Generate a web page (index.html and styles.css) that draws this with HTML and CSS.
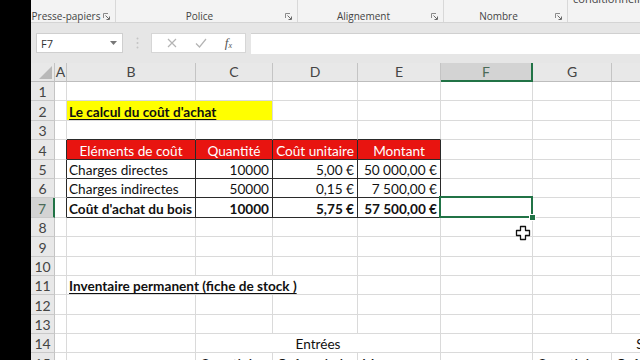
FILE: index.html
```html
<!DOCTYPE html>
<html>

<head>
    <meta charset="utf-8">
    <link rel="stylesheet" href="styles.css">
</head>

<body>

    <div class="screen">
        <div class="edge"></div>

        <div class="excel">

            <div class="ribbon">
                <div class="group g-clip"><span class="glabel">Presse-papiers</span><span class="launcher"><svg width="7" height="7" viewBox="0 0 7 7"><path d="M0.5 5V0.5H5" fill="none" stroke="#8a8a8a"/><path d="M2.5 2.5L6 6M3.5 6.5H6.5V3.5" fill="none" stroke="#6a6a6a"/></svg></span></div>
                <div class="group g-font"><span class="glabel">Police</span><span class="launcher"><svg width="7" height="7" viewBox="0 0 7 7"><path d="M0.5 5V0.5H5" fill="none" stroke="#8a8a8a"/><path d="M2.5 2.5L6 6M3.5 6.5H6.5V3.5" fill="none" stroke="#6a6a6a"/></svg></span></div>
                <div class="group g-align"><span class="glabel">Alignement</span><span class="launcher"><svg width="7" height="7" viewBox="0 0 7 7"><path d="M0.5 5V0.5H5" fill="none" stroke="#8a8a8a"/><path d="M2.5 2.5L6 6M3.5 6.5H6.5V3.5" fill="none" stroke="#6a6a6a"/></svg></span></div>
                <div class="group g-num"><span class="glabel">Nombre</span><span class="launcher"><svg width="7" height="7" viewBox="0 0 7 7"><path d="M0.5 5V0.5H5" fill="none" stroke="#8a8a8a"/><path d="M2.5 2.5L6 6M3.5 6.5H6.5V3.5" fill="none" stroke="#6a6a6a"/></svg></span></div>
                <div class="group g-style"><span class="gtop">conditionnelle</span></div>
            </div>

            <div class="fbar">
                <div class="namebox">
                    <span>F7</span>
                    <svg width="7" height="4" viewBox="0 0 7 4"><path d="M0 0H7L3.5 4Z" fill="#777"/></svg>
                </div>
                <div class="grip">
                    <svg width="3" height="12" viewBox="0 0 3 12"><circle cx="1.5" cy="1.5" r="1" fill="#c4c4c4"/><circle cx="1.5" cy="6" r="1" fill="#c4c4c4"/><circle cx="1.5" cy="10.5" r="1" fill="#c4c4c4"/></svg>
                </div>
                <div class="fbtns">
                    <svg width="10" height="10" viewBox="0 0 10 10"><path d="M1 1L9 9M9 1L1 9" stroke="#b4b4b4" stroke-width="1.2"/></svg>
                    <svg width="12" height="10" viewBox="0 0 12 10"><path d="M1 5.5L4.5 9L11 1" fill="none" stroke="#b4b4b4" stroke-width="1.2"/></svg>
                    <span class="fx">f<sub>x</sub></span>
                </div>
                <div class="finput"></div>
            </div>

            <div class="sheet">
                <table class="grid">
                    <colgroup>
                        <col class="c-rh">
                        <col class="c-a">
                        <col class="c-b">
                        <col class="c-c">
                        <col class="c-d">
                        <col class="c-e">
                        <col class="c-f">
                        <col class="c-g">
                        <col class="c-h">
                        <col class="c-i">
                    </colgroup>
                    <tr class="colhead">
                        <th class="corner"><svg width="13" height="13" viewBox="0 0 13 13"><path d="M13 0V13H0Z" fill="#b9b9b9"/></svg></th>
                        <th>A</th>
                        <th>B</th>
                        <th>C</th>
                        <th>D</th>
                        <th>E</th>
                        <th class="cur">F</th>
                        <th>G</th>
                        <th>H</th>
                        <th>I</th>
                    </tr>
                    <tr>
                        <th>1</th>
                        <td></td><td></td><td></td><td></td><td></td><td></td><td></td><td></td><td></td>
                    </tr>
                    <tr>
                        <th>2</th>
                        <td></td>
                        <td colspan="2" class="title yellow">Le calcul du coût d'achat</td>
                        <td></td><td></td><td></td><td></td><td></td><td></td>
                    </tr>
                    <tr>
                        <th>3</th>
                        <td></td>
                        <td class="tt"></td><td class="tt"></td><td class="tt"></td><td class="tt"></td>
                        <td></td><td></td><td></td><td></td>
                    </tr>
                    <tr>
                        <th>4</th>
                        <td class="tl"></td>
                        <td class="hd">Eléments de coût</td>
                        <td class="hd">Quantité</td>
                        <td class="hd">Coût unitaire</td>
                        <td class="hd">Montant</td>
                        <td></td><td></td><td></td><td></td>
                    </tr>
                    <tr>
                        <th>5</th>
                        <td class="tl"></td>
                        <td class="tb">Charges directes</td>
                        <td class="tb num">10000</td>
                        <td class="tb num">5,00 €</td>
                        <td class="tb num">50 000,00 €</td>
                        <td></td><td></td><td></td><td></td>
                    </tr>
                    <tr>
                        <th>6</th>
                        <td class="tl"></td>
                        <td class="tb">Charges indirectes</td>
                        <td class="tb num">50000</td>
                        <td class="tb num">0,15 €</td>
                        <td class="tb num">7 500,00 €</td>
                        <td></td><td></td><td></td><td></td>
                    </tr>
                    <tr class="bold">
                        <th class="cur">7</th>
                        <td class="tl"></td>
                        <td class="tb">Coût d'achat du bois</td>
                        <td class="tb num">10000</td>
                        <td class="tb num">5,75 €</td>
                        <td class="tb num">57 500,00 €</td>
                        <td class="sel"><span class="handle"></span></td>
                        <td></td><td></td><td></td>
                    </tr>
                    <tr>
                        <th>8</th>
                        <td></td><td></td><td></td><td></td><td></td><td></td><td></td><td></td><td></td>
                    </tr>
                    <tr>
                        <th>9</th>
                        <td></td><td></td><td></td><td></td><td></td><td></td><td></td><td></td><td></td>
                    </tr>
                    <tr>
                        <th>10</th>
                        <td></td><td></td><td></td><td></td><td></td><td></td><td></td><td></td><td></td>
                    </tr>
                    <tr>
                        <th>11</th>
                        <td></td>
                        <td colspan="3" class="title">Inventaire permanent (fiche de stock )</td>
                        <td></td><td></td><td></td><td></td><td></td>
                    </tr>
                    <tr>
                        <th>12</th>
                        <td></td><td></td><td></td><td></td><td></td><td></td><td></td><td></td><td></td>
                    </tr>
                    <tr>
                        <th>13</th>
                        <td></td><td></td><td></td><td></td><td></td><td></td><td></td><td></td><td></td>
                    </tr>
                    <tr>
                        <th>14</th>
                        <td></td><td></td>
                        <td colspan="3" class="mid">Entrées</td>
                        <td></td>
                        <td colspan="3" class="mid">Sorties</td>
                    </tr>
                    <tr>
                        <th>15</th>
                        <td></td><td></td>
                        <td class="sub">Quantité</td>
                        <td class="sub">Coût unitaire</td>
                        <td class="sub">Montant</td>
                        <td></td>
                        <td class="sub">Quantité</td>
                        <td class="sub">Coût unitaire</td>
                        <td class="sub">Montant</td>
                    </tr>
                </table>
            </div>

        </div>

        <!-- cell-select cursor -->
        <svg class="cursor" width="16" height="16" viewBox="0 0 16 16">
            <path d="M5.5 1.5H10.5V5.5H14.5V10.5H10.5V14.5H5.5V10.5H1.5V5.5H5.5Z" fill="#fff" stroke="#111" stroke-width="1.3" stroke-linejoin="round"/>
        </svg>
    </div>

</body>

</html>
```

FILE: styles.css
```css
body {
    margin: 0;
    background-color: #000;
    overflow: hidden;
    font-family: "Lato", "Liberation Sans", sans-serif;
}

.screen {
    display: flex;
    width: 640px;
    height: 360px;
    overflow: hidden;
    position: relative;
}

.edge {
    width: 31px;
    flex: none;
    background-color: #000;
}

.excel {
    flex: 1;
    min-width: 0;
    display: flex;
    flex-direction: column;
    background-color: #e6e6e6;
    overflow: hidden;
}

/* ribbon group captions */

.ribbon {
    height: 23px;
    flex: none;
    display: flex;
    background-color: #f3f3f3;
    border-bottom: 1px solid #d4d4d4;
    box-sizing: border-box;
    font-family: "Open Sans", "Noto Sans", sans-serif;
    font-size: 10px;
    color: #444;
}

.group {
    position: relative;
    display: flex;
    align-items: flex-end;
    justify-content: center;
    padding-right: 14px;
    padding-bottom: 0;
    border-right: 1px solid #d8d8d8;
    box-sizing: border-box;
    flex: none;
}

.glabel {
    line-height: 12px;
}

.g-clip {
    width: 85px;
}

.g-font {
    width: 182px;
}

.g-align {
    width: 146px;
}

.g-num {
    width: 124px;
}

.g-style {
    flex: 1;
    border-right: none;
    justify-content: flex-start;
    align-items: flex-start;
    padding-left: 5px;
}

.gtop {
    margin-top: -9px;
    font-size: 11px;
}

.launcher {
    position: absolute;
    right: 5px;
    bottom: 2px;
    width: 7px;
    height: 7px;
    display: flex;
}

/* formula bar */

.fbar {
    height: 40px;
    flex: none;
    display: flex;
    align-items: flex-start;
    padding-top: 10px;
    box-sizing: border-box;
    background-color: #e6e6e6;
}

.namebox {
    width: 87px;
    height: 20px;
    margin-left: 5px;
    box-sizing: border-box;
    border: 1px solid #cfcfcf;
    background-color: #fff;
    display: flex;
    align-items: center;
    justify-content: space-between;
    padding: 0 5px 0 4px;
    font-family: "Open Sans", sans-serif;
    font-size: 11px;
    color: #333;
}

.grip {
    width: 28px;
    height: 20px;
    display: flex;
    align-items: center;
    justify-content: center;
}

.fbtns {
    width: 95px;
    height: 20px;
    box-sizing: border-box;
    border: 1px solid #d6d6d6;
    background-color: #fff;
    display: flex;
    align-items: center;
    justify-content: space-around;
    padding: 0 4px 0 6px;
}

.fx {
    font-family: "Liberation Serif", serif;
    font-style: italic;
    font-size: 13px;
    color: #555;
}

.fx sub {
    font-size: 8px;
    vertical-align: -1px;
}

.finput {
    flex: 1;
    height: 21px;
    margin-left: 5px;
    background-color: #fff;
    border-top: 1px solid #d0d0d0;
    box-sizing: border-box;
}

/* worksheet */

.sheet {
    flex: 1;
    min-height: 0;
    overflow: hidden;
    background-color: #fff;
}

.grid {
    table-layout: fixed;
    border-collapse: separate;
    border-spacing: 0;
    width: 751px;
    font-size: 13.6px;
    color: #111;
}

.c-rh { width: 24px; }
.c-a { width: 12px; }
.c-b { width: 129px; }
.c-c { width: 77px; }
.c-d { width: 85px; }
.c-e { width: 83px; }
.c-f { width: 92px; }
.c-g { width: 79px; }
.c-h { width: 79px; }
.c-i { width: 91px; }

.grid tr {
    height: 19.4px;
}

.grid tr.colhead {
    height: 19px;
}

.grid td,
.grid th {
    box-sizing: border-box;
    padding: 0 2px;
    border-right: 1px solid #dadada;
    border-bottom: 1px solid #dadada;
    white-space: nowrap;
    overflow: visible;
    vertical-align: bottom;
    line-height: 16px;
    text-align: left;
}

.grid th {
    background-color: #e8e8e8;
    font-weight: normal;
    font-size: 14px;
    color: #444;
    text-align: center;
    border-right-color: #c4c4c4;
    border-bottom-color: #c9c9c9;
    padding: 0;
}

.colhead th {
    border-bottom-color: #bdbdbd;
    vertical-align: middle;
}

.colhead th.corner {
    text-align: right;
    vertical-align: bottom;
    padding: 0 2px 2px 0;
    line-height: 0;
}

.grid th.cur {
    background-color: #d3d3d3;
    color: #4a6b58;
}

.colhead th.cur {
    border-bottom: 2px solid #217346;
}

.grid tr th.cur {
    border-right: 2px solid #217346;
}

.colhead th.cur {
    border-right-color: #c4c4c4;
    border-right-width: 1px;
}

.title {
    font-weight: bold;
    text-decoration: underline;
    text-underline-offset: 2px;
}

.yellow {
    background-color: #ffff00;
}

.tt {
    border-bottom-color: #2a2a2a !important;
}

.tl {
    border-right-color: #2a2a2a !important;
}

.tb,
.hd {
    border-right-color: #2a2a2a !important;
    border-bottom-color: #2a2a2a !important;
}

.hd {
    background-color: #e81410;
    color: #fff;
    text-align: center !important;
}

.num {
    text-align: right !important;
    padding-right: 3px !important;
}

.bold td {
    font-weight: bold;
}

.mid {
    text-align: center !important;
}

.sub {
    padding-left: 4px !important;
}

.sel {
    position: relative;
}

.sel::after {
    content: "";
    position: absolute;
    left: -2px;
    top: -2px;
    right: -1px;
    bottom: -1px;
    border: 2px solid #217346;
}

.handle {
    position: absolute;
    right: -4px;
    bottom: -4px;
    width: 5px;
    height: 5px;
    background-color: #217346;
    border: 1px solid #fff;
    z-index: 2;
}

.cursor {
    position: absolute;
    left: 515px;
    top: 225px;
}
```
